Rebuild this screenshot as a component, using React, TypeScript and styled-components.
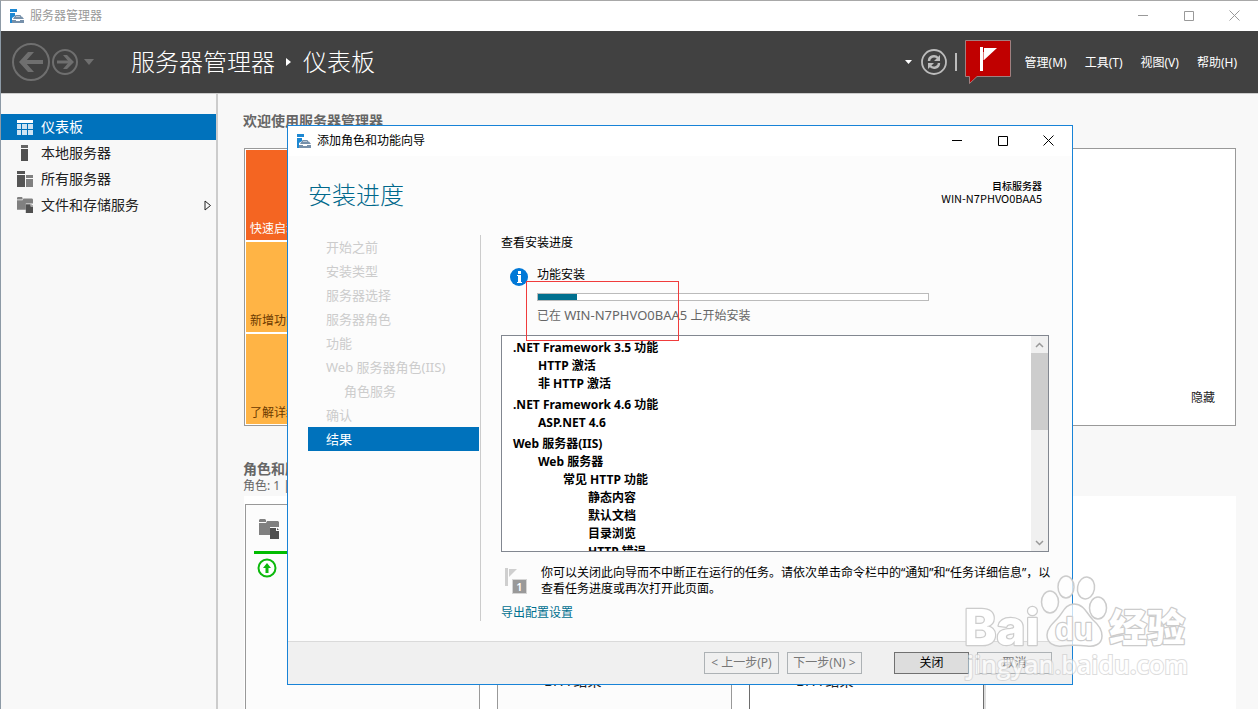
import React from "react";
import styled, { createGlobalStyle, css } from "styled-components";

const GlobalStyle = createGlobalStyle`
  * { box-sizing: border-box; }
  body { margin: 0; }
  body, button {
    font-family: "Noto Sans", "Noto Sans CJK SC", sans-serif;
    font-size: 12px;
  }
  button { padding: 0; border: 0; background: none; color: inherit; }
  ul, ol { list-style: none; margin: 0; padding: 0; }
  h1, h2, p { margin: 0; font-weight: 400; }
  svg { display: block; flex: none; }
`;

/* ---------- Main window ---------- */

const Window = styled.div`
  position: relative;
  display: flex;
  flex-direction: column;
  height: 100vh;
  overflow: hidden;
  border-top: 1px solid #a8a8a8;
  border-left: 1px solid #8d9aa6;
  background: #f8f8f8;
  color: #222;
`;

const TitleBar = styled.header<{ $muted?: boolean }>`
  display: flex;
  align-items: center;
  height: 30px;
  padding-left: 9px;
  gap: 5px;
  flex: none;
  background: #fff;
  color: ${(p) => (p.$muted ? "#999" : "#000")};
`;

const TitleText = styled.span`
  flex: 1;
  line-height: 16px;
`;

const CaptionGroup = styled.div`
  display: flex;
`;

const CaptionButton = styled.button`
  display: flex;
  align-items: center;
  justify-content: center;
  width: 46px;
  height: 30px;
`;

const CommandBar = styled.div`
  display: flex;
  align-items: center;
  height: 63px;
  flex: none;
  padding: 0 21px 0 11px;
  background: #414141;
  border-bottom: 1px solid #ccc;
  color: #fff;
`;

const HistoryTools = styled.div`
  display: flex;
  align-items: center;
  gap: 2px;
`;

const IconButton = styled.button`
  display: flex;
  align-items: center;
  justify-content: center;
  flex: none;
`;

const Breadcrumb = styled.nav`
  display: flex;
  align-items: center;
  flex: 1;
  gap: 11px;
  margin-left: 35px;
  font-size: 24px;
  line-height: 32px;
  font-weight: 300;
`;

const CommandTools = styled.div`
  display: flex;
  align-items: center;
  gap: 8px;
`;

const Separator = styled.span`
  width: 2px;
  height: 18px;
  background: #bbb;
`;

const Menu = styled.nav`
  display: flex;
  gap: 18px;
  margin-left: 14px;
  line-height: 16px;
`;

const Body = styled.div`
  display: flex;
  flex: 1;
  min-height: 0;
`;

const Sidebar = styled.nav`
  width: 217px;
  flex: none;
  padding-top: 20px;
  border-right: 2px solid #ccc;
`;

const SideLink = styled.a<{ $active?: boolean }>`
  display: flex;
  align-items: center;
  gap: 8px;
  height: 26px;
  padding: 0 4px 0 16px;
  font-size: 14px;
  line-height: 20px;
  text-decoration: none;
  color: ${(p) => (p.$active ? "#fff" : "#222")};
  background: ${(p) => (p.$active ? "#0072bc" : "transparent")};
  span { flex: 1; }
`;

const Main = styled.main`
  display: flex;
  flex-direction: column;
  flex: 1;
  min-width: 0;
  overflow: hidden;
  padding: 17px 22px 0 25px;
`;

const SectionTitle = styled.h2`
  flex: none;
  font-size: 14px;
  line-height: 20px;
  font-weight: 700;
  color: #666;
`;

const SectionNote = styled.p`
  flex: none;
  line-height: 14px;
  color: #666;
`;

const WelcomePanel = styled.section`
  display: flex;
  flex: none;
  justify-content: space-between;
  margin: 17px 0 33px 1px;
  padding: 1px;
  border: 1px solid #999;
  background: #fff;
`;

const WelcomeTabs = styled.div`
  display: grid;
  gap: 2px;
  width: 200px;
`;

const WelcomeTab = styled.button<{ $active?: boolean }>`
  display: flex;
  align-items: flex-end;
  height: 90px;
  padding: 0 0 2px 4px;
  background: ${(p) => (p.$active ? "#f46522" : "#ffb445")};
  color: ${(p) => (p.$active ? "#fff" : "#6b3a00")};
  line-height: 18px;
`;

const HideButton = styled.button`
  align-self: flex-end;
  margin: 0 19px 17px 0;
  line-height: 18px;
`;

const GroupPanel = styled.section`
  display: grid;
  grid-template-columns: repeat(auto-fill, 235px);
  grid-auto-rows: minmax(240px, auto);
  gap: 17px;
  flex: 1 0 auto;
  margin: 3px 0 0 1px;
  padding: 8px 1px 0;
  background: #fff;
`;

const Tile = styled.article<{ $raised?: boolean }>`
  padding: 0 8px;
  border: 1px solid #999;
  background: #fcfcfc;
  ${(p) =>
    p.$raised &&
    css`
      border-color: #6d6d6d;
      background: #fff;
      box-shadow: 2px 0 0 #ddd;
    `}
`;

const TileHead = styled.div`
  display: flex;
  align-items: center;
  gap: 12px;
  height: 49px;
  padding: 2px 0 0 5px;
  border-bottom: 3px solid #0b0;
  font-size: 14px;
`;

const TileRow = styled.div`
  display: flex;
  align-items: center;
  height: 28px;
  padding-left: 38px;
  font-size: 14px;
`;

const StatusRow = styled(TileRow)`
  padding-left: 3px;
  gap: 15px;
`;

/* ---------- Wizard ---------- */

const Wizard = styled.section`
  position: absolute;
  left: 286px;
  top: 124px;
  width: 786px;
  border: 1px solid #1883d7;
  background: #fcfcfc;
  color: #000;
`;

const WizardHead = styled.div`
  display: flex;
  justify-content: space-between;
  align-items: flex-start;
  padding: 23px 30px 0 20px;
  height: 79px;
`;

const WizardTitle = styled.h1`
  font-size: 24px;
  line-height: 32px;
  font-weight: 300;
  color: #00688b;
`;

const Target = styled.p`
  text-align: right;
  font-family: "Noto Sans CJK SC", sans-serif;
  font-size: 11px;
  line-height: 12px;
  padding-top: 1px;
  small { display: block; font-size: 10px; font-weight: 500; }
`;

const WizardBody = styled.div`
  display: flex;
  padding: 0 19px 20px 20px;
`;

const Steps = styled.ol`
  width: 173px;
  flex: none;
  min-height: 386px;
  padding-right: 1px;
  border-right: 1px solid #ccc;
`;

const Step = styled.li<{ $active?: boolean; $nested?: boolean }>`
  height: 24px;
  padding-left: ${(p) => (p.$nested ? 36 : 18)}px;
  font-size: 13px;
  line-height: 24px;
  color: ${(p) => (p.$active ? "#fff" : "#ccc")};
  background: ${(p) => (p.$active ? "#0072bc" : "transparent")};
`;

const Pane = styled.div`
  flex: 1;
  min-width: 0;
  padding-left: 20px;
  line-height: 16px;
`;

const Status = styled.div`
  display: grid;
  grid-template-columns: 18px 392px;
  column-gap: 9px;
  margin: 16px 0 10px;
  padding-left: 9px;
  svg { margin-top: 1px; }
`;

const Progress = styled.progress`
  display: block;
  appearance: none;
  width: 100%;
  height: 8px;
  margin: 10px 0 5px;
  border: 1px solid #bbb;
  background: #fff;
  &::-webkit-progress-bar { background: #fff; }
  &::-webkit-progress-value { background: #00708f; }
`;

const Muted = styled.p`
  color: #666;
  line-height: 18px;
`;

const HostName = styled.span`
  font-size: 13px;
`;

const FeatureBox = styled.div`
  display: flex;
  width: 548px;
  height: 217px;
  overflow: hidden;
  border: 1px solid #828790;
  background: #fff;
`;

const FeatureList = styled.ul`
  flex: 1;
  padding: 3px 0 0 11px;
`;

const Feature = styled.li<{ $level: number }>`
  padding-left: ${(p) => p.$level * 25}px;
  font-weight: 700;
  line-height: 18px;
  height: 18px;
  ${(p) => p.$level === 0 && "&:not(:first-child) { margin-top: 3px; }"}
`;

const ScrollTrack = styled.div`
  display: flex;
  flex-direction: column;
  width: 17px;
  background: #f0f0f0;
`;

const ScrollButton = styled.button`
  display: flex;
  align-items: center;
  justify-content: center;
  height: 17px;
`;

const Thumb = styled.div`
  height: 77px;
  margin-bottom: auto;
  background: #cdcdcd;
`;

const Hint = styled.div`
  display: flex;
  gap: 14px;
  margin-top: 13px;
  padding-left: 4px;
  svg { margin-top: 3px; }
`;

const ExportLink = styled.a`
  display: block;
  margin-top: 8px;
  color: #00708f;
  text-decoration: none;
`;

const WizardFooter = styled.footer`
  display: flex;
  justify-content: flex-end;
  gap: 8px;
  padding: 10px 20px;
  border-top: 1px solid #dadada;
  background: #f0f0f0;
`;

const PushButton = styled.button<{ $spaced?: boolean }>`
  width: 75px;
  height: 22px;
  border: 1px solid #707070;
  background: #ddd;
  margin-left: ${(p) => (p.$spaced ? 24 : 0)}px;
  line-height: 20px;
  white-space: pre;
  &:disabled {
    border-color: #adb2b5;
    background: #f0f0f0;
    color: #777;
  }
`;

/* ---------- Overlays ---------- */

const Highlight = styled.div`
  position: absolute;
  left: 525px;
  top: 280px;
  width: 153px;
  height: 60px;
  border: 1px solid #f03c3c;
  pointer-events: none;
`;

const Watermark = styled.svg`
  position: absolute;
  left: 959px;
  top: 569px;
  pointer-events: none;
  text { paint-order: stroke; }
`;

/* ---------- Icons ---------- */

const AppIcon = () => (
  <svg width="15" height="15" viewBox="0 0 15 15">
    <path d="M0 0h7v3H0zM0 4h5v3L2 9v5H0z" fill="#1e88d2" />
    <path d="M5.500 8V6.500h5V8" fill="none" stroke="#7690aa" />
    <path d="M3 10l1.500-2.500h7.500l2 2.500zM2 11h4v1h4v-1h4v3H2z" fill="#7690aa" />
  </svg>
);

const CaptionIcons = ({ color }: { color: string }) => (
  <CaptionGroup>
    <CaptionButton aria-label="最小化">
      <svg width="10" height="10"><path d="M0 4.500h10" stroke={color} /></svg>
    </CaptionButton>
    <CaptionButton aria-label="最大化">
      <svg width="10" height="10"><path d="M.5.5h9v9h-9z" fill="none" stroke={color} /></svg>
    </CaptionButton>
    <CaptionButton aria-label="关闭窗口">
      <svg width="12" height="12"><path d="M.5.5l10 10M10.500.5l-10 10" stroke={color} /></svg>
    </CaptionButton>
  </CaptionGroup>
);

const BackIcon = () => (
  <svg width="38" height="38" viewBox="0 0 38 38" fill="none" stroke="#6f6f6f">
    <circle cx="19" cy="19" r="18" strokeWidth="2" />
    <path d="M31 19H9" strokeWidth="4" />
    <path d="M22 9h-6L7 19l9 10h6l-9-10z" fill="#6f6f6f" stroke="none" />
  </svg>
);

const ForwardIcon = () => (
  <svg width="26" height="26" viewBox="0 0 26 26" fill="none" stroke="#6f6f6f">
    <circle cx="13" cy="13" r="12" strokeWidth="2" />
    <path d="M5 13h14" strokeWidth="3" />
    <path d="M11 6h4l7 7-7 7h-4l6-7z" fill="#6f6f6f" stroke="none" />
  </svg>
);

const RefreshIcon = () => (
  <svg width="26" height="26" viewBox="0 0 26 26" fill="none" stroke="#bcbcbc">
    <circle cx="13" cy="13" r="12" strokeWidth="1.800" />
    <path d="M8 12c0-5 6-6 9-3M18 14c0 5-6 6-9 3" strokeWidth="2.400" />
    <path d="M19 6v6h-6zM7 20v-6h6z" fill="#bcbcbc" stroke="none" />
  </svg>
);

const NotificationIcon = () => (
  <svg width="46" height="44" viewBox="0 0 46 44">
    <path d="M.5.5h45v36H12L4.500 43.500V36.500h-4z" fill="#c00000" stroke="#a08080" />
    <path d="M15 7h3v24h-3zM19 8h13L19 20z" fill="#fff" />
    <path d="M18 12v8" stroke="#fff" />
  </svg>
);

const DashboardIcon = () => (
  <svg width="16" height="15">
    <path d="M0 0h16v3H0z" fill="#fff" />
    <path d="M0 4h4v5H0zM0 10h4v5H0zM5 4h5v5H5zM5 10h5v5H5zM11 4h5v5h-5zM11 10h5v5h-5z" fill="#cfe4f3" />
  </svg>
);

const ServerIcon = () => (
  <svg width="16" height="16">
    <path d="M4 0h7v3H4z" fill="#666" />
    <path d="M4 4h7v12H4z" fill="#505050" />
  </svg>
);

const ServersIcon = () => (
  <svg width="16" height="16">
    <path d="M0 0h8v3H0zM0 4h8v12H0z" fill="#555" />
    <path d="M9 4h7v3H9zM9 8h7v8H9z" fill="#808080" />
  </svg>
);

const StorageIcon = ({ size }: { size: number }) => (
  <svg width={size} height={size} viewBox="0 0 20 20">
    <path d="M0 1l1-1h5l1 1v2H0zM0 4h7l1-2h11l1 1v5h-9v8H0z" fill="#808080" />
    <path d="M11 9h6v3h3v8h-9z" fill="#505050" />
    <path d="M18 9l2 2h-2z" fill="#505050" />
  </svg>
);

const InfoIcon = () => (
  <svg width="18" height="18">
    <circle cx="9" cy="9" r="9" fill="#0078d7" />
    <path d="M8 3h3v3H8zM7 7h4v7h1v1H7v-1h1V8H7z" fill="#fff" />
  </svg>
);

const UpIcon = () => (
  <svg width="20" height="20">
    <circle cx="10" cy="10" r="8.500" fill="#fff" stroke="#0cb90c" strokeWidth="2" />
    <path d="M10 5l4 5h-2.500v5h-3v-5H6z" fill="#0cb90c" />
  </svg>
);

const TaskFlagIcon = () => (
  <svg width="22" height="26" viewBox="0 0 22 26">
    <path d="M0 0h3v18H0zM4 1h8L4 9z" fill="#cfcfcf" />
    <rect x="7" y="11" width="15" height="15" fill="#d5d5d5" />
    <rect x="8" y="12" width="13" height="13" fill="#999" />
    <text x="14.500" y="22.500" fontSize="11" fontFamily="Noto Sans, sans-serif" fontWeight="600" fill="#fff" textAnchor="middle">1</text>
  </svg>
);

const steps = [
  { label: "开始之前" },
  { label: "安装类型" },
  { label: "服务器选择" },
  { label: "服务器角色" },
  { label: "功能" },
  { label: "Web 服务器角色(IIS)" },
  { label: "角色服务", nested: true },
  { label: "确认" },
  { label: "结果", active: true },
];

const features: [number, string][] = [
  [0, ".NET Framework 3.5 功能"],
  [1, "HTTP 激活"],
  [1, "非 HTTP 激活"],
  [0, ".NET Framework 4.6 功能"],
  [1, "ASP.NET 4.6"],
  [0, "Web 服务器(IIS)"],
  [1, "Web 服务器"],
  [2, "常见 HTTP 功能"],
  [3, "静态内容"],
  [3, "默认文档"],
  [3, "目录浏览"],
  [3, "HTTP 错误"],
];

const tileRows = ["事件", "服务", "性能", "BPA 结果"];

function AddRolesWizard() {
  return (
    <Wizard role="dialog" aria-label="添加角色和功能向导">
      <TitleBar>
        <AppIcon />
        <TitleText>添加角色和功能向导</TitleText>
        <CaptionIcons color="#000" />
      </TitleBar>
      <WizardHead>
        <WizardTitle>安装进度</WizardTitle>
        <Target>
          <small>目标服务器</small>
          WIN-N7PHVO0BAA5
        </Target>
      </WizardHead>
      <WizardBody>
        <Steps>
          {steps.map((s) => (
            <Step key={s.label} $active={s.active} $nested={s.nested}>{s.label}</Step>
          ))}
        </Steps>
        <Pane>
          <p>查看安装进度</p>
          <Status>
            <InfoIcon />
            <div>
              <label htmlFor="install-progress">功能安装</label>
              <Progress id="install-progress" value={10} max={100} />
              <Muted>已在 <HostName>WIN-N7PHVO0BAA5</HostName> 上开始安装</Muted>
            </div>
          </Status>
          <FeatureBox>
            <FeatureList>
              {features.map(([level, name]) => (
                <Feature key={name} $level={level}>{name}</Feature>
              ))}
            </FeatureList>
            <ScrollTrack>
              <ScrollButton aria-label="向上滚动">
                <svg width="9" height="6"><path d="M1 5l3.500-3.500L8 5" fill="none" stroke="#999" strokeWidth="1.500" /></svg>
              </ScrollButton>
              <Thumb />
              <ScrollButton aria-label="向下滚动">
                <svg width="9" height="6"><path d="M1 1l3.500 3.500L8 1" fill="none" stroke="#999" strokeWidth="1.500" /></svg>
              </ScrollButton>
            </ScrollTrack>
          </FeatureBox>
          <Hint>
            <TaskFlagIcon />
            <p>
              你可以关闭此向导而不中断正在运行的任务。请依次单击命令栏中的“通知”和“任务详细信息”，以查看任务进度或再次打开此页面。
            </p>
          </Hint>
          <ExportLink href="#export">导出配置设置</ExportLink>
        </Pane>
      </WizardBody>
      <WizardFooter>
        <PushButton disabled>{"< 上一步(P)"}</PushButton>
        <PushButton disabled>{"下一步(N) >"}</PushButton>
        <PushButton $spaced>关闭</PushButton>
        <PushButton disabled>取消</PushButton>
      </WizardFooter>
    </Wizard>
  );
}

function BaiduWatermark() {
  return (
    <Watermark width="234" height="116" viewBox="0 0 234 116">
      <g fill="#fff" fillOpacity=".75" stroke="#ccc" strokeWidth="1.500" strokeLinejoin="round">
        <ellipse cx="90" cy="32" rx="8.500" ry="11" />
        <ellipse cx="106" cy="17" rx="8" ry="11" />
        <ellipse cx="126" cy="18" rx="8.500" ry="11" transform="rotate(10 126 18)" />
        <ellipse cx="138" cy="38" rx="8.500" ry="11" />
        <path d="M114 34c10 0 13 10 19 16 6 5 9 10 9 16 0 9-9 11-15 10-8-1-18-1-25 0-8 1-15-3-15-11 0-6 5-11 10-16 6-6 8-15 17-15z" />
      </g>
      <g fill="#fff" stroke="#ccc" strokeWidth="2.500" strokeLinejoin="round">
        <text x="4" y="75" fontSize="49" fontFamily="Inter, sans-serif" fontWeight="800">Bai</text>
        <text x="95" y="70" fontSize="31" fontFamily="Liberation Sans, sans-serif" fontWeight="700">du</text>
        <text x="149" y="71" fontSize="38" fontFamily="Noto Sans CJK SC, sans-serif" fontWeight="900">经验</text>
      </g>
      <text x="7" y="104" fontSize="25" fontFamily="Open Sans, sans-serif" fontWeight="600" fill="#fff" stroke="#ccc" strokeWidth="2" opacity=".65">jingyan.baidu.com</text>
    </Watermark>
  );
}

export default function App() {
  return (
    <>
      <GlobalStyle />
      <Window>
        <TitleBar $muted>
          <AppIcon />
          <TitleText>服务器管理器</TitleText>
          <CaptionIcons color="#999" />
        </TitleBar>
        <CommandBar>
          <HistoryTools>
            <IconButton aria-label="后退"><BackIcon /></IconButton>
            <IconButton aria-label="前进"><ForwardIcon /></IconButton>
            <IconButton aria-label="历史记录">
              <svg width="16" height="6"><path d="M4 0h10l-5 6z" fill="#6f6f6f" /></svg>
            </IconButton>
          </HistoryTools>
          <Breadcrumb>
            <span>服务器管理器</span>
            <svg width="6" height="8"><path d="M0 0l5 4-5 4z" fill="#fff" /></svg>
            <span>仪表板</span>
          </Breadcrumb>
          <CommandTools>
            <IconButton aria-label="更多">
              <svg width="8" height="5"><path d="M0 0h7L3.500 4z" fill="#fff" /></svg>
            </IconButton>
            <IconButton aria-label="刷新"><RefreshIcon /></IconButton>
            <Separator />
            <IconButton aria-label="通知"><NotificationIcon /></IconButton>
          </CommandTools>
          <Menu>
            <button>管理(M)</button>
            <button>工具(T)</button>
            <button>视图(V)</button>
            <button>帮助(H)</button>
          </Menu>
        </CommandBar>
        <Body>
          <Sidebar>
            <SideLink href="#dashboard" $active><DashboardIcon /><span>仪表板</span></SideLink>
            <SideLink href="#local"><ServerIcon /><span>本地服务器</span></SideLink>
            <SideLink href="#all"><ServersIcon /><span>所有服务器</span></SideLink>
            <SideLink href="#storage">
              <StorageIcon size={16} />
              <span>文件和存储服务</span>
              <svg width="8" height="11"><path d="M1 1l5.500 4.500L1 10z" fill="none" stroke="#222" /></svg>
            </SideLink>
          </Sidebar>
          <Main>
            <SectionTitle>欢迎使用服务器管理器</SectionTitle>
            <WelcomePanel>
              <WelcomeTabs>
                <WelcomeTab $active>快速启动(Q)</WelcomeTab>
                <WelcomeTab>新增功能(W)</WelcomeTab>
                <WelcomeTab>了解详细信息(L)</WelcomeTab>
              </WelcomeTabs>
              <HideButton>隐藏</HideButton>
            </WelcomePanel>
            <SectionTitle>角色和服务器组</SectionTitle>
            <SectionNote>角色: 1 | 服务器组: 1</SectionNote>
            <GroupPanel>
              <Tile>
                <TileHead><StorageIcon size={20} />文件和存储服务</TileHead>
                <StatusRow><UpIcon />可管理性</StatusRow>
              </Tile>
              <Tile>
                <TileHead><ServerIcon />本地服务器</TileHead>
                <StatusRow><UpIcon />可管理性</StatusRow>
                {tileRows.map((r) => <TileRow key={r}>{r}</TileRow>)}
              </Tile>
              <Tile $raised>
                <TileHead><ServersIcon />所有服务器</TileHead>
                <StatusRow><UpIcon />可管理性</StatusRow>
                {tileRows.map((r) => <TileRow key={r}>{r}</TileRow>)}
              </Tile>
            </GroupPanel>
          </Main>
        </Body>
        <AddRolesWizard />
        <Highlight />
        <BaiduWatermark />
      </Window>
    </>
  );
}
